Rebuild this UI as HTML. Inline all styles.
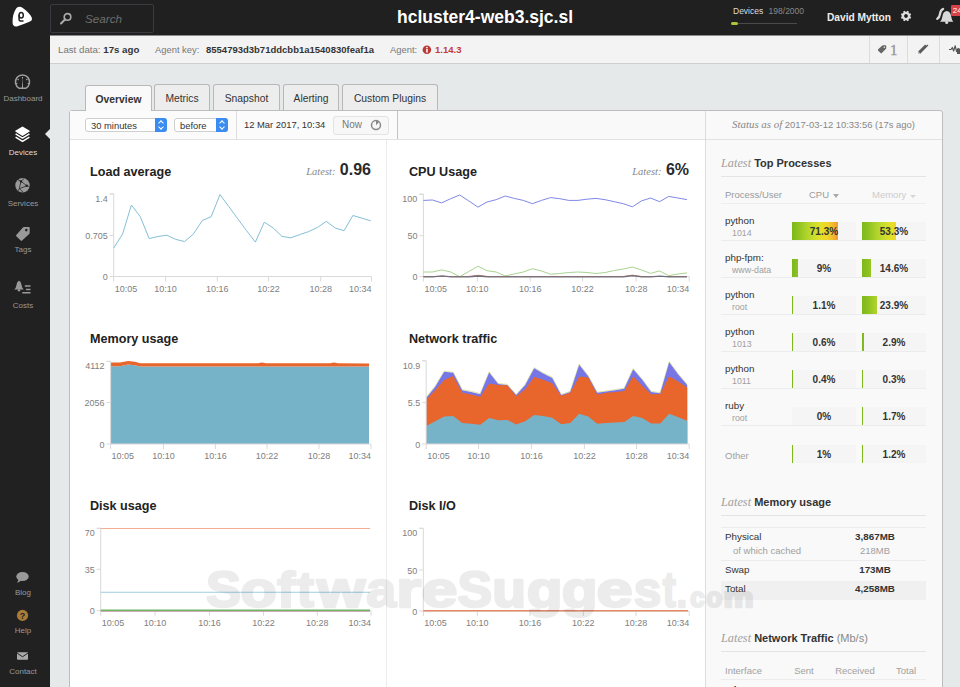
<!DOCTYPE html>
<html><head><meta charset="utf-8">
<style>
*{margin:0;padding:0;box-sizing:border-box}
html,body{width:960px;height:687px;overflow:hidden;background:#e6e9ea;font-family:"Liberation Sans",sans-serif;color:#333}
.a{position:absolute;white-space:nowrap}
#side{position:absolute;left:0;top:0;width:50px;height:687px;background:#212121}
#head{position:absolute;left:50px;top:0;width:910px;height:35px;background:#202020}
#info{position:absolute;left:50px;top:35px;width:910px;height:29px;background:#f3f3f3;border-bottom:1px solid #cfcfcf}
.slbl{position:absolute;left:0;width:46px;text-align:center;font-size:8px;color:#999}
.tab{position:absolute;top:84.3px;height:26px;background:#ededed;border:1px solid #b8b8b8;border-bottom:none;border-radius:3px 3px 0 0;font-size:10.3px;color:#333;text-align:center;line-height:27px}
#panel{position:absolute;left:69px;top:110px;width:874px;height:600px;background:#f9f9f9;border:1px solid #bdbdbd;border-radius:3px}
.sel{position:absolute;top:118px;height:14px;background:#fff;border:1px solid #cfcfcf;border-radius:3px;font-size:9.4px;line-height:13px;padding-left:5px;color:#333}
.sel b{position:absolute;right:-1px;top:-1px;width:12px;height:14px;background:#3b8cf0;border-radius:0 3px 3px 0}.sel b:before{content:"";position:absolute;left:3.5px;top:3px;width:3px;height:3px;border-left:1px solid #fff;border-top:1px solid #fff;transform:rotate(45deg)}.sel b:after{content:"";position:absolute;left:3.5px;top:7px;width:3px;height:3px;border-right:1px solid #fff;border-bottom:1px solid #fff;transform:rotate(45deg)}
.ct{font-size:12.6px;font-weight:bold;color:#222}
.lt{font-family:"Liberation Serif",serif;font-style:italic;font-size:10.5px;color:#888}
.lv{font-size:16px;font-weight:bold;color:#2a2a2a}
.rp{font-size:9.8px;color:#333}
.rs{font-size:8.8px;color:#a0a0a0}
.cell{position:absolute;width:64px;height:18px;background:#f5f5f5}
.cell i{position:absolute;left:0;top:0;height:18px;background:linear-gradient(90deg,#7db81c 0,#8ec21f 10%,#a9d02a 20%,#c4dc2c 32%,#e2e02a 44%,#f0d42a 56%,#f2b82c 64%,#f0a030 70%)}
.cell span{position:absolute;left:0;width:64px;top:1px;line-height:18px;text-align:center;font-size:10px;font-weight:bold;color:#333}
.hl{position:absolute;height:1px;background:#e4e4e4}
</style></head><body>
<div id="side"></div>
<div id="head"></div>
<div id="info"></div>
<div class="a" style="left:50px;top:35px;width:910px;height:1px;background:#8a8a8a"></div>

<!-- sidebar -->
<svg class="a" style="left:0;top:0" width="50" height="687" viewBox="0 0 50 687">
<path d="M16.5,8 Q19.5,5.6 22.5,7.8 Q29,12.5 31.5,17 Q33,20 30,21.5 Q23,24.5 17.5,26.2 Q13,27.3 12.6,23 Q12.2,14 16.5,8 Z" fill="#fff"/>
<ellipse cx="21.2" cy="15.3" rx="2.1" ry="2.8" fill="none" stroke="#222" stroke-width="1.5"/>
<path d="M19.1,15 L19.1,19.8 Q19.1,21 20.5,21 L23.5,21" fill="none" stroke="#222" stroke-width="1.5"/>
<path d="M19.2,88.3 A7.1,7.1 0 1 1 25.8,88.3 Z" fill="none" stroke="#a0a0a0" stroke-width="1.5"/>
<path d="M21.9,88.3 L22.5,77 L23.1,88.3 Z" fill="#a0a0a0"/>
<path d="M22.5,77 v1.6 M17.6,79 l1.1,1 M27.4,79 l-1.1,1 M15.9,83.5 h1.5 M29.1,83.5 h-1.5" stroke="#a0a0a0" stroke-width="1.1"/>
<path d="M22.5,126.4 L29.7,130.7 L29.7,131.5 L22.5,135.9 L15.3,131.5 L15.3,130.7 Z" fill="#fff"/>
<path d="M15.6,133.9 L22.5,138.1 L29.4,133.9" fill="none" stroke="#fff" stroke-width="1.5" stroke-linejoin="round"/>
<path d="M15.6,137.1 L22.5,141.3 L29.4,137.1" fill="none" stroke="#fff" stroke-width="1.5" stroke-linejoin="round"/>
<circle cx="22.5" cy="185.3" r="7.2" fill="#999"/>
<path d="M21,181.3 L26.9,185.8 L19.3,188.7 Z M21,181.3 L17.5,179.5 M21,181.3 L24,178.6 M26.9,185.8 L29.5,186.5 M19.3,188.7 L17.5,191.5 M19.3,188.7 L23,192" fill="none" stroke="#2a2a2a" stroke-width="0.8"/>
<circle cx="21" cy="181.5" r="1.2" fill="#222"/><circle cx="26.7" cy="185.8" r="1.2" fill="#222"/>
<path d="M16.3,234.9 L22.9,227.6 Q23.3,227.1 24,227.1 L28.9,227.1 Q29.7,227.1 29.7,228 L29.7,232.8 Q29.7,233.4 29.2,233.9 L22.1,240.6 Q21.4,241.2 20.7,240.6 L16.3,236.2 Q15.7,235.5 16.3,234.9 Z" fill="#999"/>
<circle cx="26.3" cy="230.1" r="1.3" fill="#222"/>
<path d="M14.2,289.6 Q15.8,288.8 16.5,285 Q17.2,281.2 19,280.8 Q20.8,281.2 21.5,285 Q22.2,288.8 23.8,289.6 Z" fill="#999"/>
<circle cx="19" cy="290.2" r="1.2" fill="#999"/>
<path d="M24.8,286.1 h5.7 M26,289.4 h4.5 M22.2,292.7 h8.3" stroke="#999" stroke-width="1.5"/>
<ellipse cx="22.5" cy="576.5" rx="6.2" ry="4.5" fill="#999"/>
<path d="M18.5,579.5 L17.2,583 L21.5,580.5 Z" fill="#999"/>
<circle cx="22.5" cy="615.4" r="5.6" fill="#a87c38"/>
<text x="22.5" y="618.8" text-anchor="middle" font-family="Liberation Sans" font-weight="bold" font-size="9" fill="#222">?</text>
<rect x="17" y="652.3" width="11" height="7.4" rx="0.8" fill="#aaa"/>
<path d="M17,653 L22.5,656.8 L28,653" fill="none" stroke="#222" stroke-width="1"/>
</svg>
<div class="slbl" style="top:93.5px">Dashboard</div>
<div class="slbl" style="top:147.5px;color:#ddd">Devices</div>
<div class="a" style="left:45px;top:128px;width:0;height:0;border-top:6px solid transparent;border-bottom:6px solid transparent;border-right:6px solid #e6e9ea"></div>
<div class="slbl" style="top:199px">Services</div>
<div class="slbl" style="top:244.5px">Tags</div>
<div class="slbl" style="top:300.5px">Costs</div>
<div class="slbl" style="top:588px">Blog</div>
<div class="slbl" style="top:626px">Help</div>
<div class="slbl" style="top:667px">Contact</div>

<!-- header -->
<div class="a" style="left:50px;top:4px;width:104px;height:28.5px;border:1px solid #3a3a40;border-radius:2px"></div>
<svg class="a" style="left:58px;top:11px" width="14" height="15" viewBox="0 0 14 15"><circle cx="9.5" cy="5.9" r="3.3" fill="none" stroke="#aaa" stroke-width="1.6"/><path d="M7.2,8.3 L3,12.5" stroke="#aaa" stroke-width="2" stroke-linecap="round"/></svg>
<div class="a" style="left:85px;top:12px;font-size:11.7px;font-style:italic;color:#6f6f6f">Search</div>
<div class="a" style="left:397px;top:7px;font-size:17.5px;font-weight:bold;color:#fff">hcluster4-web3.sjc.sl</div>
<div class="a" style="left:733px;top:6px;font-size:8.5px;color:#ddd">Devices <span style="color:#888;margin-left:3px">198/2000</span></div>
<div class="a" style="left:731px;top:23px;width:66px;height:1px;background:#4a4a4a"></div>
<div class="a" style="left:730.5px;top:21.5px;width:7px;height:3.5px;background:#a8c63a;border-radius:2px"></div>
<div class="a" style="left:827px;top:11.5px;font-size:10.2px;font-weight:bold;color:#eee">David Mytton</div>
<svg class="a" style="left:895.5px;top:6.3px" width="20" height="20" viewBox="-10 -10 20 20"><circle cx="0" cy="0" r="3.1" fill="none" stroke="#ddd" stroke-width="2.4"/><rect x="-0.95" y="-5.2" width="1.9" height="2.2" fill="#ddd" transform="rotate(22.5)"/><rect x="-0.95" y="-5.2" width="1.9" height="2.2" fill="#ddd" transform="rotate(67.5)"/><rect x="-0.95" y="-5.2" width="1.9" height="2.2" fill="#ddd" transform="rotate(112.5)"/><rect x="-0.95" y="-5.2" width="1.9" height="2.2" fill="#ddd" transform="rotate(157.5)"/><rect x="-0.95" y="-5.2" width="1.9" height="2.2" fill="#ddd" transform="rotate(202.5)"/><rect x="-0.95" y="-5.2" width="1.9" height="2.2" fill="#ddd" transform="rotate(247.5)"/><rect x="-0.95" y="-5.2" width="1.9" height="2.2" fill="#ddd" transform="rotate(292.5)"/><rect x="-0.95" y="-5.2" width="1.9" height="2.2" fill="#ddd" transform="rotate(337.5)"/></svg>
<svg class="a" style="left:930px;top:0" width="30" height="30" viewBox="0 0 30 30"><path d="M16.8,10.9 Q20.5,11 21.2,16.5 Q21.8,20.5 23.4,21.8 L10,21.8 Q11.8,20.5 12.4,16.5 Q13,11 16.8,10.9 Z" fill="#d8d8d8"/><circle cx="16.7" cy="22.6" r="1.5" fill="#d8d8d8"/><path d="M13.1,9 Q10.5,10 10,14 Q9.5,17.5 7.3,18.8" fill="none" stroke="#d8d8d8" stroke-width="2.3" stroke-linecap="round"/></svg>
<div class="a" style="left:951.2px;top:4.8px;width:12px;height:11.4px;background:#d8404a;border-radius:1px;font-size:8px;color:#fff;line-height:11px;padding-left:1.5px">24</div>

<!-- info bar -->
<div class="a" style="left:58px;top:44px;font-size:9.7px;color:#777">Last data: <b style="color:#333">17s ago</b></div>
<div class="a" style="left:155px;top:44px;font-size:9.4px;color:#777">Agent key: <b style="color:#333;position:absolute;left:51px;font-size:9.5px">8554793d3b71ddcbb1a1540830feaf1a</b></div>
<div class="a" style="left:390px;top:44px;font-size:9.4px;color:#777">Agent:</div>
<svg class="a" style="left:422px;top:45px" width="10" height="10" viewBox="0 0 10 10"><circle cx="4.9" cy="4.7" r="4.3" fill="#b93a36"/><rect x="4.2" y="4" width="1.5" height="3.6" fill="#fff"/><circle cx="4.95" cy="2.6" r="0.85" fill="#fff"/></svg>
<div class="a" style="left:435px;top:44px;font-size:9.5px;font-weight:bold;color:#c43a3a">1.14.3</div>
<div class="a" style="left:869px;top:36px;width:1px;height:27px;background:#dcdcdc"></div>
<div class="a" style="left:907px;top:36px;width:1px;height:27px;background:#dcdcdc"></div>
<div class="a" style="left:939px;top:36px;width:1px;height:27px;background:#dcdcdc"></div>
<svg class="a" style="left:870px;top:36px" width="90" height="27" viewBox="870 36 90 27">
<path d="M878.2,49.3 L882.3,45.6 Q882.7,45.3 883.3,45.3 L885.4,45.3 Q886.2,45.3 886.2,46.1 L886.2,48 Q886.2,48.6 885.8,49 L881.8,53.1 Q881.2,53.7 880.6,53.1 L878.2,50.7 Q877.5,50 878.2,49.3 Z" fill="#666"/>
<circle cx="884.3" cy="47.2" r="0.8" fill="#eee"/>
<text x="890.2" y="54.6" font-family="Liberation Serif" font-size="14" fill="#999" stroke="#999" stroke-width="0.5">1</text>
<path d="M919.2,52.6 L926.3,45.5" stroke="#5a5a5a" stroke-width="3" stroke-linecap="butt"/>
<path d="M926.3,45.5 L927.3,44.5 L928.4,45.6 L927.4,46.6 Z" fill="#5a5a5a"/>
<path d="M918.1,53.7 L918.6,51.5 L920.3,53.2 Z" fill="#999"/>
<path d="M949,49.5 L951,49.5 L952.3,47.5 L953.6,51 L955.2,45.8 L956.6,51.5 L958,48.5 L960,49.5" fill="none" stroke="#555" stroke-width="1.2" stroke-linejoin="round"/>
<rect x="957" y="49" width="3" height="5" fill="#555"/>
</svg>
<!-- tabs -->
<div class="tab" style="left:85px;top:85.3px;width:67px;height:26px;background:#f9f9f9;font-weight:bold;line-height:28px;z-index:2">Overview</div>
<div class="tab" style="left:154px;width:56px">Metrics</div>
<div class="tab" style="left:213px;width:67px">Snapshot</div>
<div class="tab" style="left:283px;width:56px">Alerting</div>
<div class="tab" style="left:342px;width:96px">Custom Plugins</div>

<div id="panel"></div>
<!-- toolbar -->
<div class="a" style="left:70px;top:111px;width:327px;height:28px;background:#fbfbfb"></div>
<div class="a" style="left:70px;top:139px;width:872px;height:1px;background:#e2e2e2"></div>
<div class="sel" style="left:85px;width:82px">30 minutes<b></b></div>
<div class="sel" style="left:174px;width:54px">before<b></b></div>
<div class="a" style="left:236px;top:111px;width:1px;height:28px;background:#dedede"></div>
<div class="a" style="left:244px;top:119px;font-size:9.4px;color:#333">12 Mar 2017, 10:34</div>
<div class="a" style="left:333px;top:115.5px;width:56px;height:19px;border:1px solid #e3e3e3;border-radius:3px;background:#f7f7f7"></div>
<div class="a" style="left:342px;top:118.8px;font-size:10px;color:#777">Now</div>
<svg class="a" style="left:369.5px;top:119px" width="12" height="12" viewBox="0 0 12 12"><circle cx="6" cy="6.1" r="4.5" fill="none" stroke="#888" stroke-width="1.5"/><path d="M6,6.3 L6,1.6 A4.5,4.5 0 0 1 9.2,2.9 Z" fill="#888"/></svg>
<div class="a" style="left:397px;top:111px;width:1px;height:28px;background:#c4c4c4"></div>

<!-- chart area -->
<div class="a" style="left:70px;top:140px;width:635px;height:547px;background:#fff"></div>
<div class="a" style="left:386px;top:140px;width:1px;height:547px;background:#ececec"></div>
<div class="a" style="left:705px;top:111px;width:1px;height:576px;background:#dcdcdc"></div>

<div class="a ct" style="left:90px;top:164.5px">Load average</div>
<div class="a ct" style="left:409px;top:164.5px">CPU Usage</div>
<div class="a ct" style="left:90px;top:331.5px">Memory usage</div>
<div class="a ct" style="left:409px;top:331.5px">Network traffic</div>
<div class="a ct" style="left:90px;top:498.5px">Disk usage</div>
<div class="a ct" style="left:409px;top:498.5px">Disk I/O</div>
<div class="a" style="right:589px;top:161px"><span class="lt">Latest:</span> <span class="lv">0.96</span></div>
<div class="a" style="right:271px;top:161px"><span class="lt">Latest:</span> <span class="lv">6%</span></div>

<svg width="960" height="687" style="position:absolute;left:0;top:0">
<style>.tl{font-family:"Liberation Sans",sans-serif;font-size:9px;fill:#808080}</style>
<line x1="113.7" y1="194" x2="113.7" y2="276.5" stroke="#d9d9d9" stroke-width="1"/>
<line x1="113.7" y1="194" x2="109.7" y2="194" stroke="#d9d9d9" stroke-width="1"/>
<line x1="113.7" y1="276.5" x2="371.5" y2="276.5" stroke="#d9d9d9" stroke-width="1"/>
<line x1="109.7" y1="194" x2="113.7" y2="194" stroke="#d9d9d9" stroke-width="1"/>
<text x="107.7" y="201.8" text-anchor="end" class="tl">1.4</text>
<line x1="109.7" y1="235.5" x2="113.7" y2="235.5" stroke="#d9d9d9" stroke-width="1"/>
<text x="107.7" y="239.0" text-anchor="end" class="tl">0.705</text>
<line x1="109.7" y1="276.5" x2="113.7" y2="276.5" stroke="#d9d9d9" stroke-width="1"/>
<text x="107.7" y="280.0" text-anchor="end" class="tl">0</text>
<line x1="113.7" y1="276.5" x2="113.7" y2="281.5" stroke="#d9d9d9" stroke-width="1"/>
<text x="114.7" y="291.5" text-anchor="start" class="tl">10:05</text>
<line x1="165.6" y1="276.5" x2="165.6" y2="281.5" stroke="#d9d9d9" stroke-width="1"/>
<text x="165.6" y="291.5" text-anchor="middle" class="tl">10:10</text>
<line x1="217.3" y1="276.5" x2="217.3" y2="281.5" stroke="#d9d9d9" stroke-width="1"/>
<text x="217.3" y="291.5" text-anchor="middle" class="tl">10:16</text>
<line x1="268.4" y1="276.5" x2="268.4" y2="281.5" stroke="#d9d9d9" stroke-width="1"/>
<text x="268.4" y="291.5" text-anchor="middle" class="tl">10:22</text>
<line x1="320.7" y1="276.5" x2="320.7" y2="281.5" stroke="#d9d9d9" stroke-width="1"/>
<text x="320.7" y="291.5" text-anchor="middle" class="tl">10:28</text>
<line x1="371.5" y1="276.5" x2="371.5" y2="281.5" stroke="#d9d9d9" stroke-width="1"/>
<text x="371.5" y="291.5" text-anchor="end" class="tl">10:34</text>
<polyline points="113.7,248.0 122.6,234.0 131.4,205.0 140.3,216.7 149.1,238.5 158.0,236.5 166.9,235.2 175.7,239.4 184.6,241.5 193.4,234.0 202.3,220.5 211.1,216.7 220.0,194.6 228.9,206.7 237.7,218.7 246.6,230.7 255.4,242.1 264.3,222.2 273.2,228.0 282.0,236.4 290.9,237.8 299.7,234.6 308.6,231.6 317.4,227.5 326.3,221.3 335.2,228.0 344.0,230.7 352.9,215.5 361.7,218.1 370.6,220.8" fill="none" stroke="#84bfd6" stroke-width="1"/>
<line x1="423.4" y1="194" x2="423.4" y2="276.5" stroke="#d9d9d9" stroke-width="1"/>
<line x1="423.4" y1="194" x2="419.4" y2="194" stroke="#d9d9d9" stroke-width="1"/>
<line x1="423.4" y1="276.5" x2="689.2" y2="276.5" stroke="#d9d9d9" stroke-width="1"/>
<line x1="419.4" y1="194.5" x2="423.4" y2="194.5" stroke="#d9d9d9" stroke-width="1"/>
<text x="417.4" y="202.3" text-anchor="end" class="tl">100</text>
<line x1="419.4" y1="235.7" x2="423.4" y2="235.7" stroke="#d9d9d9" stroke-width="1"/>
<text x="417.4" y="239.2" text-anchor="end" class="tl">50</text>
<line x1="419.4" y1="276.5" x2="423.4" y2="276.5" stroke="#d9d9d9" stroke-width="1"/>
<text x="417.4" y="280.0" text-anchor="end" class="tl">0</text>
<line x1="423.4" y1="276.5" x2="423.4" y2="281.5" stroke="#d9d9d9" stroke-width="1"/>
<text x="424.4" y="291.5" text-anchor="start" class="tl">10:05</text>
<line x1="477.3" y1="276.5" x2="477.3" y2="281.5" stroke="#d9d9d9" stroke-width="1"/>
<text x="477.3" y="291.5" text-anchor="middle" class="tl">10:10</text>
<line x1="530.2" y1="276.5" x2="530.2" y2="281.5" stroke="#d9d9d9" stroke-width="1"/>
<text x="530.2" y="291.5" text-anchor="middle" class="tl">10:16</text>
<line x1="582.6" y1="276.5" x2="582.6" y2="281.5" stroke="#d9d9d9" stroke-width="1"/>
<text x="582.6" y="291.5" text-anchor="middle" class="tl">10:22</text>
<line x1="636.2" y1="276.5" x2="636.2" y2="281.5" stroke="#d9d9d9" stroke-width="1"/>
<text x="636.2" y="291.5" text-anchor="middle" class="tl">10:28</text>
<line x1="689.2" y1="276.5" x2="689.2" y2="281.5" stroke="#d9d9d9" stroke-width="1"/>
<text x="689.2" y="291.5" text-anchor="end" class="tl">10:34</text>
<polyline points="423.4,200.4 432.5,200.0 441.6,202.9 450.7,198.7 459.7,195.0 468.8,200.9 477.9,207.1 487.0,202.0 496.1,199.7 505.2,196.0 514.3,198.4 523.3,200.4 532.4,203.7 541.5,200.4 550.6,197.6 559.7,198.7 568.8,200.4 577.9,200.4 587.0,199.2 596.0,198.4 605.1,199.7 614.2,201.7 623.3,203.7 632.4,206.8 641.5,200.9 650.6,198.0 659.6,201.7 668.7,196.4 677.8,198.0 686.9,199.6" fill="none" stroke="#8088e8" stroke-width="1"/>
<polyline points="423.4,272.0 432.5,272.0 441.6,269.9 450.7,272.0 459.7,276.7 468.8,271.5 477.9,266.2 487.0,270.7 496.1,272.0 505.2,275.9 514.3,274.0 523.3,272.0 532.4,268.7 541.5,271.0 550.6,274.2 559.7,273.5 568.8,272.5 577.9,272.0 587.0,272.5 596.0,273.5 605.1,272.5 614.2,270.5 623.3,269.0 632.4,267.0 641.5,270.0 650.6,273.4 659.6,270.9 668.7,275.7 677.8,274.0 686.9,272.9" fill="none" stroke="#a8d490" stroke-width="1"/>
<polyline points="423.4,276.5 468,276.5 478.3,275.3 488,276.5 623,276.5 632.3,275.2 641.7,276.5 686.9,276.5" fill="none" stroke="#d07a68" stroke-width="1"/>
<polyline points="423.4,276.8 432.6,276.8 442,275.9 451,276.8 469,276.8 478.3,276 488,276.8 623.6,276.8 632.3,275.7 641.7,276.8 651,276.8 660,276.2 669,276.8 686.9,276.8" fill="none" stroke="#6e6e7c" stroke-width="1.3"/>
<path d="M110.6,444 L110.6,366.2 L120,366.2 L128,364.6 L135,365.3 L140,366.4 L369,366.4 L369,444 Z" fill="#76b3c9"/>
<path d="M110.6,362.6 L120,362.6 L128,361 L135,361.8 L140,363.2 L258,363.2 L262,362.4 L266,363.2 L330,363.2 L334,362.5 L338,363.2 L369,363.4 L369,366.4 L140,366.4 L135,365.3 L128,364.6 L120,366.2 L110.6,366.2 Z" fill="#e8652c"/>
<line x1="110.6" y1="361.4" x2="110.6" y2="444" stroke="#d9d9d9" stroke-width="1"/>
<line x1="110.6" y1="361.4" x2="106.6" y2="361.4" stroke="#d9d9d9" stroke-width="1"/>
<line x1="110.6" y1="444" x2="371" y2="444" stroke="#d9d9d9" stroke-width="1"/>
<line x1="106.6" y1="361.4" x2="110.6" y2="361.4" stroke="#d9d9d9" stroke-width="1"/>
<text x="104.6" y="369.2" text-anchor="end" class="tl">4112</text>
<line x1="106.6" y1="402.4" x2="110.6" y2="402.4" stroke="#d9d9d9" stroke-width="1"/>
<text x="104.6" y="405.9" text-anchor="end" class="tl">2056</text>
<line x1="106.6" y1="444" x2="110.6" y2="444" stroke="#d9d9d9" stroke-width="1"/>
<text x="104.6" y="447.5" text-anchor="end" class="tl">0</text>
<line x1="110.6" y1="444" x2="110.6" y2="449" stroke="#d9d9d9" stroke-width="1"/>
<text x="111.6" y="459" text-anchor="start" class="tl">10:05</text>
<line x1="163.5" y1="444" x2="163.5" y2="449" stroke="#d9d9d9" stroke-width="1"/>
<text x="163.5" y="459" text-anchor="middle" class="tl">10:10</text>
<line x1="215.4" y1="444" x2="215.4" y2="449" stroke="#d9d9d9" stroke-width="1"/>
<text x="215.4" y="459" text-anchor="middle" class="tl">10:16</text>
<line x1="267" y1="444" x2="267" y2="449" stroke="#d9d9d9" stroke-width="1"/>
<text x="267" y="459" text-anchor="middle" class="tl">10:22</text>
<line x1="319" y1="444" x2="319" y2="449" stroke="#d9d9d9" stroke-width="1"/>
<text x="319" y="459" text-anchor="middle" class="tl">10:28</text>
<line x1="371" y1="444" x2="371" y2="449" stroke="#d9d9d9" stroke-width="1"/>
<text x="371" y="459" text-anchor="end" class="tl">10:34</text>
<polyline points="426.2,397.4 435.2,386.1 444.2,371.2 453.2,372.1 462.2,389.6 471.2,391.3 480.2,393.6 489.2,371.8 498.2,383.5 507.2,384.3 516.2,394.5 525.2,384.3 534.2,367.7 543.2,373.0 552.2,377.3 561.2,394.5 570.2,391.3 579.2,364.2 588.2,375.6 597.2,392.2 606.2,391.0 615.2,389.6 624.2,388.2 633.2,368.6 642.2,379.1 651.2,391.3 660.2,392.7 669.2,361.6 678.2,373.9 687.2,384.3" fill="none" stroke="#c8d070" stroke-width="0.6"/>
<path d="M426.2,444 L426.2,398.0 L435.2,386.7 L444.2,371.8 L453.2,372.7 L462.2,390.2 L471.2,391.9 L480.2,394.2 L489.2,372.4 L498.2,384.1 L507.2,384.9 L516.2,395.1 L525.2,384.9 L534.2,368.3 L543.2,373.6 L552.2,377.9 L561.2,395.1 L570.2,391.9 L579.2,364.8 L588.2,376.2 L597.2,392.8 L606.2,391.6 L615.2,390.2 L624.2,388.8 L633.2,369.2 L642.2,379.7 L651.2,391.9 L660.2,393.3 L669.2,362.2 L678.2,374.5 L687.2,384.9 L687.2,444 Z" fill="#7676e6"/>
<path d="M426.2,444 L426.2,399.8 L435.2,390.0 L444.2,380.0 L453.2,375.9 L462.2,392.8 L471.2,394.5 L480.2,396.8 L489.2,383.5 L498.2,384.9 L507.2,385.3 L516.2,396.3 L525.2,389.3 L534.2,377.1 L543.2,379.7 L552.2,383.2 L561.2,395.8 L570.2,392.8 L579.2,376.6 L588.2,377.6 L597.2,394.5 L606.2,392.8 L615.2,391.9 L624.2,391.0 L633.2,376.2 L642.2,385.8 L651.2,394.2 L660.2,394.0 L669.2,376.2 L678.2,381.4 L687.2,387.6 L687.2,444 Z" fill="#e8652c"/>
<path d="M426.2,444 L426.2,426.0 L435.2,421.2 L444.2,416.4 L453.2,416.0 L462.2,423.0 L471.2,423.7 L480.2,424.8 L489.2,418.1 L498.2,420.2 L507.2,419.9 L516.2,424.6 L525.2,421.3 L534.2,415.0 L543.2,415.9 L552.2,417.8 L561.2,424.2 L570.2,423.0 L579.2,413.8 L588.2,416.4 L597.2,423.7 L606.2,423.0 L615.2,422.5 L624.2,422.1 L633.2,416.0 L642.2,418.1 L651.2,423.4 L660.2,423.4 L669.2,413.8 L678.2,417.2 L687.2,420.7 L687.2,444 Z" fill="#76b3c9"/>
<line x1="426.2" y1="360.8" x2="426.2" y2="444" stroke="#d9d9d9" stroke-width="1"/>
<line x1="426.2" y1="360.8" x2="422.2" y2="360.8" stroke="#d9d9d9" stroke-width="1"/>
<line x1="426.2" y1="444" x2="689.2" y2="444" stroke="#d9d9d9" stroke-width="1"/>
<line x1="422.2" y1="360.8" x2="426.2" y2="360.8" stroke="#d9d9d9" stroke-width="1"/>
<text x="420.2" y="368.6" text-anchor="end" class="tl">10.9</text>
<line x1="422.2" y1="402.7" x2="426.2" y2="402.7" stroke="#d9d9d9" stroke-width="1"/>
<text x="420.2" y="406.2" text-anchor="end" class="tl">5.5</text>
<line x1="422.2" y1="444" x2="426.2" y2="444" stroke="#d9d9d9" stroke-width="1"/>
<text x="420.2" y="447.5" text-anchor="end" class="tl">0</text>
<line x1="426.2" y1="444" x2="426.2" y2="449" stroke="#d9d9d9" stroke-width="1"/>
<text x="427.2" y="459" text-anchor="start" class="tl">10:05</text>
<line x1="478.6" y1="444" x2="478.6" y2="449" stroke="#d9d9d9" stroke-width="1"/>
<text x="478.6" y="459" text-anchor="middle" class="tl">10:10</text>
<line x1="531.4" y1="444" x2="531.4" y2="449" stroke="#d9d9d9" stroke-width="1"/>
<text x="531.4" y="459" text-anchor="middle" class="tl">10:16</text>
<line x1="584.4" y1="444" x2="584.4" y2="449" stroke="#d9d9d9" stroke-width="1"/>
<text x="584.4" y="459" text-anchor="middle" class="tl">10:22</text>
<line x1="636.5" y1="444" x2="636.5" y2="449" stroke="#d9d9d9" stroke-width="1"/>
<text x="636.5" y="459" text-anchor="middle" class="tl">10:28</text>
<line x1="689.2" y1="444" x2="689.2" y2="449" stroke="#d9d9d9" stroke-width="1"/>
<text x="689.2" y="459" text-anchor="end" class="tl">10:34</text>
<line x1="100.7" y1="528.3" x2="100.7" y2="610.7" stroke="#d9d9d9" stroke-width="1"/>
<line x1="100.7" y1="528.3" x2="96.7" y2="528.3" stroke="#d9d9d9" stroke-width="1"/>
<line x1="100.7" y1="610.7" x2="371" y2="610.7" stroke="#d9d9d9" stroke-width="1"/>
<line x1="96.7" y1="528.3" x2="100.7" y2="528.3" stroke="#d9d9d9" stroke-width="1"/>
<text x="94.7" y="536.0999999999999" text-anchor="end" class="tl">70</text>
<line x1="96.7" y1="569.3" x2="100.7" y2="569.3" stroke="#d9d9d9" stroke-width="1"/>
<text x="94.7" y="572.8" text-anchor="end" class="tl">35</text>
<line x1="96.7" y1="610.7" x2="100.7" y2="610.7" stroke="#d9d9d9" stroke-width="1"/>
<text x="94.7" y="614.2" text-anchor="end" class="tl">0</text>
<line x1="100.7" y1="610.7" x2="100.7" y2="615.7" stroke="#d9d9d9" stroke-width="1"/>
<text x="101.7" y="625.7" text-anchor="start" class="tl">10:05</text>
<line x1="155" y1="610.7" x2="155" y2="615.7" stroke="#d9d9d9" stroke-width="1"/>
<text x="155" y="625.7" text-anchor="middle" class="tl">10:10</text>
<line x1="209.5" y1="610.7" x2="209.5" y2="615.7" stroke="#d9d9d9" stroke-width="1"/>
<text x="209.5" y="625.7" text-anchor="middle" class="tl">10:16</text>
<line x1="263.5" y1="610.7" x2="263.5" y2="615.7" stroke="#d9d9d9" stroke-width="1"/>
<text x="263.5" y="625.7" text-anchor="middle" class="tl">10:22</text>
<line x1="317.3" y1="610.7" x2="317.3" y2="615.7" stroke="#d9d9d9" stroke-width="1"/>
<text x="317.3" y="625.7" text-anchor="middle" class="tl">10:28</text>
<line x1="371" y1="610.7" x2="371" y2="615.7" stroke="#d9d9d9" stroke-width="1"/>
<text x="371" y="625.7" text-anchor="end" class="tl">10:34</text>
<line x1="100.7" y1="528.5" x2="370" y2="528.5" stroke="#f2ad94" stroke-width="1.1"/>
<line x1="100.7" y1="592.3" x2="370" y2="592.3" stroke="#9ccde0" stroke-width="1.1"/>
<line x1="100.7" y1="611.3" x2="370" y2="611.3" stroke="#c49aa8" stroke-width="1"/>
<line x1="100.7" y1="610.3" x2="370" y2="610.3" stroke="#72b662" stroke-width="1.5"/>
<line x1="423.3" y1="528.3" x2="423.3" y2="611" stroke="#d9d9d9" stroke-width="1"/>
<line x1="423.3" y1="528.3" x2="419.3" y2="528.3" stroke="#d9d9d9" stroke-width="1"/>
<line x1="423.3" y1="611" x2="689.2" y2="611" stroke="#d9d9d9" stroke-width="1"/>
<line x1="419.3" y1="528.3" x2="423.3" y2="528.3" stroke="#d9d9d9" stroke-width="1"/>
<text x="417.3" y="536.0999999999999" text-anchor="end" class="tl">100</text>
<line x1="419.3" y1="570" x2="423.3" y2="570" stroke="#d9d9d9" stroke-width="1"/>
<text x="417.3" y="573.5" text-anchor="end" class="tl">50</text>
<line x1="419.3" y1="611" x2="423.3" y2="611" stroke="#d9d9d9" stroke-width="1"/>
<text x="417.3" y="614.5" text-anchor="end" class="tl">0</text>
<line x1="423.3" y1="611" x2="423.3" y2="616" stroke="#d9d9d9" stroke-width="1"/>
<text x="424.3" y="626" text-anchor="start" class="tl">10:05</text>
<line x1="477.3" y1="611" x2="477.3" y2="616" stroke="#d9d9d9" stroke-width="1"/>
<text x="477.3" y="626" text-anchor="middle" class="tl">10:10</text>
<line x1="530" y1="611" x2="530" y2="616" stroke="#d9d9d9" stroke-width="1"/>
<text x="530" y="626" text-anchor="middle" class="tl">10:16</text>
<line x1="583.3" y1="611" x2="583.3" y2="616" stroke="#d9d9d9" stroke-width="1"/>
<text x="583.3" y="626" text-anchor="middle" class="tl">10:22</text>
<line x1="636" y1="611" x2="636" y2="616" stroke="#d9d9d9" stroke-width="1"/>
<text x="636" y="626" text-anchor="middle" class="tl">10:28</text>
<line x1="689.2" y1="611" x2="689.2" y2="616" stroke="#d9d9d9" stroke-width="1"/>
<text x="689.2" y="626" text-anchor="end" class="tl">10:34</text>
<line x1="423.3" y1="610.8" x2="688" y2="610.8" stroke="#e08868" stroke-width="1.4"/>
</svg>

<!-- right panel -->

<div class="a" style="left:732px;top:118px;font-size:9.45px;color:#888"><span class="lt" style="font-size:10.9px">Status as of</span> 2017-03-12 10:33:56 (17s ago)</div>

<div class="a" style="left:721px;top:156px;font-size:11px;font-weight:bold;color:#333"><span class="lt" style="font-size:12.3px;font-weight:normal;color:#a0a0a0">Latest</span> Top Processes</div>
<div class="hl" style="left:721px;top:176px;width:205px"></div>
<div class="a" style="left:725px;top:189px;font-size:9.5px;color:#999">Process/User</div>
<div class="a" style="left:809px;top:189px;font-size:9.5px;color:#999">CPU<span style="display:inline-block;margin-left:4px;vertical-align:0.5px;border-left:3.5px solid transparent;border-right:3.5px solid transparent;border-top:4px solid #aaa"></span></div>
<div class="a" style="left:872px;top:189px;font-size:9.5px;color:#ccc">Memory<span style="display:inline-block;margin-left:4px;vertical-align:0.5px;border-left:3px solid transparent;border-right:3px solid transparent;border-top:3.5px solid #d5d5d5"></span></div>
<div class="hl" style="left:721px;top:203px;width:205px;background:#eee"></div>

<div class="a rp" style="left:725px;top:215px">python</div>
<div class="a rs" style="left:732px;top:227.5px">1014</div>
<div class="cell" style="left:792px;top:222px"><i style="width:45.6px;background-size:64px 18px"></i><span>71.3%</span></div>
<div class="cell" style="left:862px;top:222px"><i style="width:34.1px;background-size:64px 18px"></i><span>53.3%</span></div>
<div class="hl" style="left:721px;top:240px;width:205px;background:#ececec"></div>
<div class="a rp" style="left:725px;top:252px">php-fpm:</div>
<div class="a rs" style="left:732px;top:264.5px">www-data</div>
<div class="cell" style="left:792px;top:259px"><i style="width:5.8px;background-size:64px 18px"></i><span>9%</span></div>
<div class="cell" style="left:862px;top:259px"><i style="width:9.3px;background-size:64px 18px"></i><span>14.6%</span></div>
<div class="hl" style="left:721px;top:277px;width:205px;background:#ececec"></div>
<div class="a rp" style="left:725px;top:289px">python</div>
<div class="a rs" style="left:732px;top:301.5px">root</div>
<div class="cell" style="left:792px;top:296px"><i style="width:1.0px;background-size:64px 18px"></i><span>1.1%</span></div>
<div class="cell" style="left:862px;top:296px"><i style="width:15.3px;background-size:64px 18px"></i><span>23.9%</span></div>
<div class="hl" style="left:721px;top:314px;width:205px;background:#ececec"></div>
<div class="a rp" style="left:725px;top:326px">python</div>
<div class="a rs" style="left:732px;top:338.5px">1013</div>
<div class="cell" style="left:792px;top:333px"><i style="width:1.0px;background-size:64px 18px"></i><span>0.6%</span></div>
<div class="cell" style="left:862px;top:333px"><i style="width:1.9px;background-size:64px 18px"></i><span>2.9%</span></div>
<div class="hl" style="left:721px;top:351px;width:205px;background:#ececec"></div>
<div class="a rp" style="left:725px;top:363px">python</div>
<div class="a rs" style="left:732px;top:375.5px">1011</div>
<div class="cell" style="left:792px;top:370px"><i style="width:1.0px;background-size:64px 18px"></i><span>0.4%</span></div>
<div class="cell" style="left:862px;top:370px"><i style="width:1.0px;background-size:64px 18px"></i><span>0.3%</span></div>
<div class="hl" style="left:721px;top:388px;width:205px;background:#ececec"></div>
<div class="a rp" style="left:725px;top:400px">ruby</div>
<div class="a rs" style="left:732px;top:412.5px">root</div>
<div class="cell" style="left:792px;top:407px"><i style="width:0.0px;background-size:64px 18px"></i><span>0%</span></div>
<div class="cell" style="left:862px;top:407px"><i style="width:1.1px;background-size:64px 18px"></i><span>1.7%</span></div>
<div class="hl" style="left:721px;top:425px;width:205px;background:#ececec"></div>
<div class="a rs" style="left:725px;top:450px;font-size:9.5px">Other</div>
<div class="cell" style="left:792px;top:445px"><i style="width:1.0px;background-size:64px 18px"></i><span>1%</span></div>
<div class="cell" style="left:862px;top:445px"><i style="width:1.0px;background-size:64px 18px"></i><span>1.2%</span></div>
<div class="a" style="left:721px;top:495px;font-size:11px;font-weight:bold;color:#333"><span class="lt" style="font-size:12.3px;font-weight:normal;color:#a0a0a0">Latest</span> Memory usage</div>
<div class="hl" style="left:721px;top:515px;width:205px"></div>
<div class="hl" style="left:721px;top:527px;width:205px;background:#ececec"></div>
<div class="a rp" style="left:725px;top:531px">Physical</div>
<div class="a rs" style="left:733px;top:545px;font-size:9.5px">of which cached</div>
<div class="a rp" style="left:835px;width:80px;text-align:center;top:531px;font-weight:bold">3,867MB</div>
<div class="a rs" style="left:835px;width:80px;text-align:center;top:545px;font-size:9.5px">218MB</div>
<div class="hl" style="left:721px;top:560px;width:205px;background:#ececec"></div>
<div class="a rp" style="left:725px;top:564px">Swap</div>
<div class="a rp" style="left:835px;width:80px;text-align:center;top:564px;font-weight:bold">173MB</div>
<div class="a" style="left:721px;top:580.5px;width:205px;height:19px;background:#f0f0f0"></div>
<div class="a rp" style="left:725px;top:583px">Total</div>
<div class="a rp" style="left:835px;width:80px;text-align:center;top:583px;font-weight:bold">4,258MB</div>
<div class="a" style="left:721px;top:631px;font-size:11px;font-weight:bold;color:#333"><span class="lt" style="font-size:12.3px;font-weight:normal;color:#a0a0a0">Latest</span> Network Traffic <span style="font-weight:normal;color:#888">(Mb/s)</span></div>
<div class="hl" style="left:721px;top:651px;width:205px"></div>
<div class="a rs" style="left:725px;top:665px;font-size:9.5px">Interface</div>
<div class="a rs" style="left:784px;width:40px;text-align:center;top:665px;font-size:9.5px">Sent</div>
<div class="a rs" style="left:825px;width:60px;text-align:center;top:665px;font-size:9.5px">Received</div>
<div class="a rs" style="left:886px;width:40px;text-align:center;top:665px;font-size:9.5px">Total</div>
<div class="hl" style="left:721px;top:679px;width:205px;background:#ececec"></div>
<div class="a rp" style="left:725px;top:684px;font-weight:bold">eth1</div>
<div class="a rp" style="left:784px;width:40px;text-align:center;top:684px;font-weight:bold">0.95</div>
<div class="a rp" style="left:825px;width:60px;text-align:center;top:684px;font-weight:bold">4.72</div>
<div class="a rp" style="left:886px;width:40px;text-align:center;top:684px;font-weight:bold">4.98</div>

<svg class="a" style="left:0;top:0;z-index:50" width="960" height="687"><g fill="#000" stroke="#000" stroke-width="2.4" stroke-linejoin="round" opacity="0.07" font-family="Liberation Sans" font-weight="bold"><text x="206.1" y="607" font-size="50" textLength="35.0" lengthAdjust="spacingAndGlyphs">S</text><text x="240.5" y="607" font-size="50" textLength="36.2" lengthAdjust="spacingAndGlyphs">o</text><text x="277.2" y="607" font-size="50" textLength="17.9" lengthAdjust="spacingAndGlyphs">f</text><text x="297.1" y="607" font-size="50" textLength="17.0" lengthAdjust="spacingAndGlyphs">t</text><text x="317.1" y="607" font-size="50" textLength="48.3" lengthAdjust="spacingAndGlyphs">w</text><text x="366.3" y="607" font-size="50" textLength="29.9" lengthAdjust="spacingAndGlyphs">a</text><text x="396.2" y="607" font-size="50" textLength="24.9" lengthAdjust="spacingAndGlyphs">r</text><text x="421.5" y="607" font-size="50" textLength="36.0" lengthAdjust="spacingAndGlyphs">e</text><text x="457.5" y="607" font-size="50" textLength="34.6" lengthAdjust="spacingAndGlyphs">S</text><text x="492.2" y="607" font-size="50" textLength="33.8" lengthAdjust="spacingAndGlyphs">u</text><text x="526.8" y="607" font-size="50" textLength="35.8" lengthAdjust="spacingAndGlyphs">g</text><text x="561.8" y="607" font-size="50" textLength="35.8" lengthAdjust="spacingAndGlyphs">g</text><text x="596.4" y="607" font-size="50" textLength="36.2" lengthAdjust="spacingAndGlyphs">e</text><text x="633.8" y="607" font-size="50" textLength="27.6" lengthAdjust="spacingAndGlyphs">s</text><text x="662.8" y="607" font-size="50" textLength="13.1" lengthAdjust="spacingAndGlyphs">t</text><text x="676.7" y="606.5" font-size="40" textLength="10.3" lengthAdjust="spacingAndGlyphs">.</text><text x="690.3" y="606.5" font-size="27" textLength="14.3" lengthAdjust="spacingAndGlyphs">c</text><text x="706.3" y="606.5" font-size="27" textLength="15.9" lengthAdjust="spacingAndGlyphs">o</text><text x="723.4" y="606.5" font-size="27" textLength="30.1" lengthAdjust="spacingAndGlyphs">m</text></g></svg>
</body></html>
